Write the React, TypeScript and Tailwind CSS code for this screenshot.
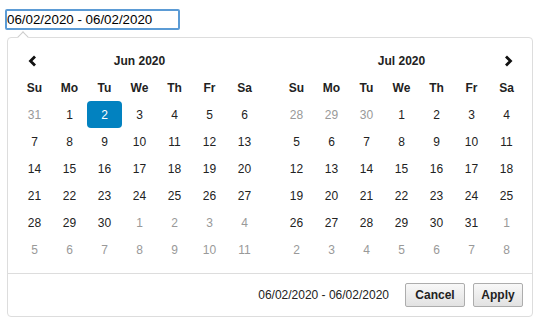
import React from "react"

const dayNames = ["Su", "Mo", "Tu", "We", "Th", "Fr", "Sa"]

interface Cell {
  day: number
  off: boolean
  active: boolean
}

// six weeks of days for the given month, starting on the Sunday before the 1st
function buildMonth(year: number, month: number): Cell[] {
  const first = new Date(year, month, 1)
  const start = new Date(year, month, 1 - first.getDay())
  const cells: Cell[] = []
  for (let i = 0; i < 42; i++) {
    const d = new Date(start.getFullYear(), start.getMonth(), start.getDate() + i)
    cells.push({
      day: d.getDate(),
      off: d.getMonth() !== month,
      active: d.getFullYear() === 2020 && d.getMonth() === 5 && d.getDate() === 2 && d.getMonth() === month,
    })
  }
  return cells
}

const Chevron = ({ dir }: { dir: "left" | "right" }) => (
  <svg width="9" height="12" viewBox="0 0 9 12" className="block">
    <polyline
      points={dir === "left" ? "7,1.5 2.5,6 7,10.5" : "2,1.5 6.5,6 2,10.5"}
      fill="none"
      stroke="#111"
      strokeWidth="2.8"
    />
  </svg>
)

const Calendar = ({ title, year, month, side }: { title: string; year: number; month: number; side: "left" | "right" }) => {
  const cells = buildMonth(year, month)
  return (
    <div className="w-[245px]">
      <div className="grid grid-cols-7 h-[27px] items-center">
        <div className="flex justify-center">{side === "left" && <span className="-ml-[5px]"><Chevron dir="left" /></span>}</div>
        <div className="col-span-5 text-center text-[12px] font-bold text-[#222]">{title}</div>
        <div className="flex justify-center">{side === "right" && <span className="ml-[3px]"><Chevron dir="right" /></span>}</div>
      </div>
      <div className="grid grid-cols-7 h-[27px] items-center">
        {dayNames.map((n) => (
          <div key={n} className="text-center text-[12px] font-bold text-[#222]">
            {n}
          </div>
        ))}
      </div>
      <div className="grid grid-cols-7">
        {cells.map((c, i) => (
          <div
            key={i}
            className={
              c.active
                ? "h-[27px] flex items-center justify-center text-[12px] rounded-[4px] bg-[#0282c0] text-white"
                : c.off
                ? "h-[27px] flex items-center justify-center text-[12px] text-[#999]"
                : "h-[27px] flex items-center justify-center text-[12px] text-[#222]"
            }
          >
            {c.day}
          </div>
        ))}
      </div>
    </div>
  )
}

export default function App() {
  return (
    <div className="w-[544px] h-[323px] bg-white pt-[9px] pl-[5px] font-['Liberation_Sans',Arial,sans-serif]">
      <div className="w-[175px] h-[21px] border-2 border-[#5b9bd5] rounded-[2px] flex items-center text-[13.33px] text-black leading-none">
        06/02/2020 - 06/02/2020
      </div>
      <div className="relative mt-[7px] ml-[2px] w-[526px] h-[280px] border border-[#ddd] rounded-[4px] bg-white">
        <div className="absolute -top-[5px] left-[11px] w-[8px] h-[8px] rotate-45 bg-white border-l border-t border-[#ccc]" />
        <div className="flex gap-[17px] pl-[9px] pt-[9px] h-[235px]">
          <Calendar title="Jun 2020" year={2020} month={5} side="left" />
          <Calendar title="Jul 2020" year={2020} month={6} side="right" />
        </div>
        <div className="border-t border-[#ddd] h-[43px] flex items-center justify-end pr-[9px]">
          <span className="text-[12px] text-[#222] mr-[16px]">06/02/2020 - 06/02/2020</span>
          <button className="w-[60px] h-[24px] border border-[#adadad] rounded-[2px] bg-linear-to-b from-[#f8f8f8] to-[#e2e2e2] text-[12px] font-bold text-[#222] mr-[8px]">
            Cancel
          </button>
          <button className="w-[50px] h-[24px] border border-[#adadad] rounded-[2px] bg-linear-to-b from-[#f8f8f8] to-[#e2e2e2] text-[12px] font-bold text-[#222]">
            Apply
          </button>
        </div>
      </div>
    </div>
  )
}
